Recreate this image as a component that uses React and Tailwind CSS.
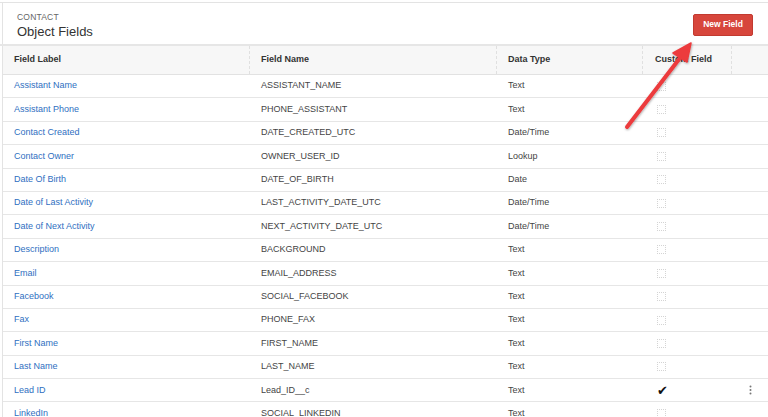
import React from "react";

const rows = [
  ["Assistant Name", "ASSISTANT_NAME", "Text"],
  ["Assistant Phone", "PHONE_ASSISTANT", "Text"],
  ["Contact Created", "DATE_CREATED_UTC", "Date/Time"],
  ["Contact Owner", "OWNER_USER_ID", "Lookup"],
  ["Date Of Birth", "DATE_OF_BIRTH", "Date"],
  ["Date of Last Activity", "LAST_ACTIVITY_DATE_UTC", "Date/Time"],
  ["Date of Next Activity", "NEXT_ACTIVITY_DATE_UTC", "Date/Time"],
  ["Description", "BACKGROUND", "Text"],
  ["Email", "EMAIL_ADDRESS", "Text"],
  ["Facebook", "SOCIAL_FACEBOOK", "Text"],
  ["Fax", "PHONE_FAX", "Text"],
  ["First Name", "FIRST_NAME", "Text"],
  ["Last Name", "LAST_NAME", "Text"],
  ["Lead ID", "Lead_ID__c", "Text", true],
  ["LinkedIn", "SOCIAL_LINKEDIN", "Text"],
];

export default function App() {
  return (
    <div
      className="relative w-[768px] h-[417px] overflow-hidden bg-white pt-[2px]"
      style={{ fontFamily: '"Liberation Sans", Arial, sans-serif' }}
    >
      <div className="border-t border-[#e3e3e3] flex flex-col">
        <div className="flex items-center justify-between h-[41px] border-l border-[#e3e3e3] ml-[2px] pl-[14px] pr-[15px]">
          <div className="flex flex-col mt-[5px]">
            <span className="text-[8.5px] leading-[10px] text-[#666] tracking-[0.2px]">CONTACT</span>
            <span className="text-[13px] leading-[16px] text-[#333] mt-[2px]">Object Fields</span>
          </div>
          <button className="w-[60px] h-[22px] rounded-[2px] bg-[#d7463c] border border-[#c23a30] text-white text-[8.5px] font-bold flex items-center justify-center mb-[-2px]">
            New Field
          </button>
        </div>
        <div className="h-[2px] bg-[#e6e6e6]" />
        <div className="ml-[2px] border-l border-[#e3e3e3]">
          <div className="grid grid-cols-[247px_247px_146px_89px_36px] h-[29px] bg-[#f7f7f7] border-b border-[#e2e2e2] text-[9px] font-bold text-[#333]">
            <div className="flex items-center pl-[11px] border-r border-dashed border-[#e0e0e0]">Field Label</div>
            <div className="flex items-center pl-[11px] border-r border-dashed border-[#e0e0e0]">Field Name</div>
            <div className="flex items-center pl-[11px] border-r border-dashed border-[#e0e0e0]">Data Type</div>
            <div className="flex items-center pl-[12px] border-r border-dashed border-[#e0e0e0]">Custom Field</div>
            <div />
          </div>
          {rows.map(([label, name, type, custom]) => (
            <div
              key={name}
              className="grid grid-cols-[247px_247px_146px_89px_36px] h-[23.4px] border-b border-[#e6e6e6] text-[9px] items-center"
            >
              <div className="pl-[11px] text-[#2f6fc1]">{label}</div>
              <div className="pl-[11px] text-[#444]">{name}</div>
              <div className="pl-[11px] text-[#444]">{type}</div>
              <div className="pl-[13px] flex items-center">
                {custom ? (
                  <span className="w-[12px] h-[10px] flex items-center justify-center text-[13px] leading-none text-[#111]">✔</span>
                ) : (
                  <span className="w-[9px] h-[9px] ml-[1px] border border-dotted border-[#d4d4d4]" />
                )}
              </div>
              <div className="flex items-center justify-center pl-[1px]">
                {custom && (
                  <svg width="3" height="10" viewBox="0 0 3 10">
                    <circle cx="1.5" cy="1.5" r="1" fill="#777" />
                    <circle cx="1.5" cy="5" r="1" fill="#777" />
                    <circle cx="1.5" cy="8.5" r="1" fill="#777" />
                  </svg>
                )}
              </div>
            </div>
          ))}
        </div>
      </div>
      <svg
        className="absolute left-0 top-0 pointer-events-none"
        width="768"
        height="417"
        viewBox="0 0 768 417"
      >
        <defs>
          <filter id="sh" x="-20%" y="-20%" width="140%" height="140%">
            <feDropShadow dx="0.5" dy="1" stdDeviation="1" floodColor="#000" floodOpacity="0.35" />
          </filter>
        </defs>
        <g filter="url(#sh)">
          <line x1="627" y1="127" x2="683" y2="54" stroke="#ec3b3d" strokeWidth="4" strokeLinecap="round" />
          <polygon points="691,43 673,53 687,62" fill="#ec3b3d" stroke="#ec3b3d" strokeWidth="1.5" strokeLinejoin="round" />
        </g>
      </svg>
    </div>
  );
}
